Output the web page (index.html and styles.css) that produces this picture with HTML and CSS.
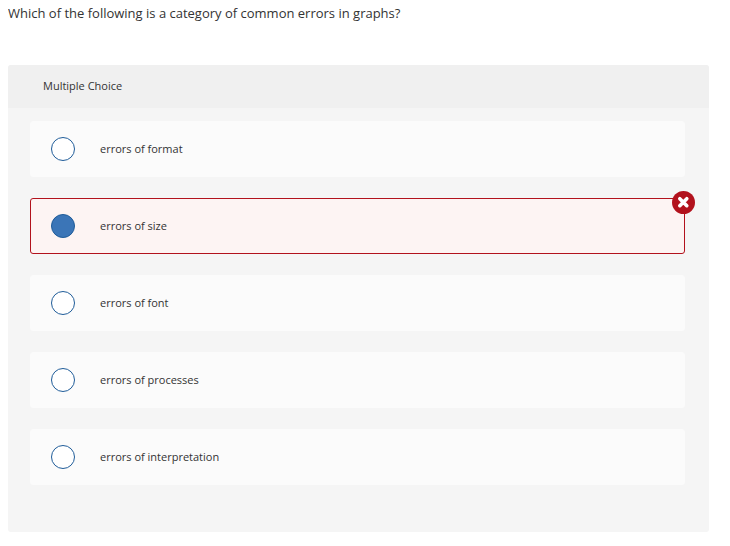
FILE: index.html
```html
<!DOCTYPE html>
<html lang="en">
<head>
    <meta charset="UTF-8">
    <meta name="viewport" content="width=device-width, initial-scale=1.0">
    <title>Multiple Choice</title>
    <link rel="stylesheet" href="styles.css">
</head>
<body>
    <p class="question" id="question">Which of the following is a category of common errors in graphs?</p>

    <div class="panel">
        <h2 class="panel-title">Multiple Choice</h2>

        <div class="choices" role="radiogroup" aria-labelledby="question">
            <label class="choice">
                <input type="radio" name="answer" value="format">
                <span>errors of format</span>
            </label>
            <label class="choice wrong">
                <input type="radio" name="answer" value="size" checked>
                <span>errors of size</span>
                <svg class="badge" viewBox="0 0 23 23" aria-hidden="true">
                    <circle cx="11.5" cy="11.5" r="11.5" fill="#b2121d"/>
                    <path d="M7.8 7.7l7 7M14.8 7.7l-7 7" stroke="#fff" stroke-width="3.6" stroke-linecap="round"/>
                </svg>
            </label>
            <label class="choice">
                <input type="radio" name="answer" value="font">
                <span>errors of font</span>
            </label>
            <label class="choice">
                <input type="radio" name="answer" value="processes">
                <span>errors of processes</span>
            </label>
            <label class="choice">
                <input type="radio" name="answer" value="interpretation">
                <span>errors of interpretation</span>
            </label>
        </div>
    </div>
</body>
</html>
```
FILE: styles.css
```css
body {
    font-family: "Open Sans", "Noto Sans", sans-serif;
    background-color: #fff;
    color: #333;
    margin: 3px 21px 14px 8px;
}
.question {
    margin: 0 0 42px;
    font-size: 13px;
    line-height: 20px;
}
.panel {
    background-color: #f5f5f5;
    border-radius: 3px;
    overflow: hidden;
}
.panel-title {
    margin: 0;
    padding: 11px 35px 12px;
    background-color: #f0f0f0;
    font-size: 11px;
    font-weight: normal;
    line-height: 20px;
}
.choices {
    display: flex;
    flex-direction: column;
    gap: 21px;
    padding: 13px 24px 47px 22px;
}
.choice {
    position: relative;
    display: flex;
    align-items: center;
    gap: 25px;
    padding: 15px 20px;
    background-color: #fbfbfb;
    border: 1px solid #fbfbfb;
    border-radius: 3px;
    font-size: 11px;
    line-height: 20px;
    cursor: pointer;
}
.choice input {
    appearance: none;
    width: 24px;
    height: 24px;
    margin: 0;
    background-color: #fff;
    border: 1px solid #1f5c99;
    border-radius: 50%;
    cursor: pointer;
}
.choice input:checked {
    background-color: #3b75b7;
}
.wrong {
    background-color: #fdf4f3;
    border-color: #b2121d;
}
.badge {
    position: absolute;
    top: -8px;
    right: -11px;
    width: 23px;
    height: 23px;
}
```
